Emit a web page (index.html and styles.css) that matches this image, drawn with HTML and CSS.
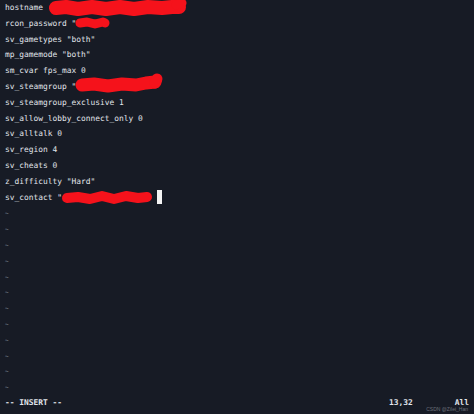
FILE: index.html
```html
<!DOCTYPE html>
<html>
<head>
<meta charset="utf-8">
<link rel="stylesheet" href="styles.css">
</head>
<body>
<div class="term">
  <div class="buf">
    <div class="ln">hostname</div>
    <div class="ln">rcon_password "</div>
    <div class="ln">sv_gametypes "both"</div>
    <div class="ln">mp_gamemode "both"</div>
    <div class="ln">sm_cvar fps_max 0</div>
    <div class="ln">sv_steamgroup "</div>
    <div class="ln">sv_steamgroup_exclusive 1</div>
    <div class="ln">sv_allow_lobby_connect_only 0</div>
    <div class="ln">sv_alltalk 0</div>
    <div class="ln">sv_region 4</div>
    <div class="ln">sv_cheats 0</div>
    <div class="ln">z_difficulty "Hard"</div>
    <div class="ln">sv_contact "<span class="gap"></span><span class="cursor"></span></div>
    <div class="ln tl">~</div>
    <div class="ln tl">~</div>
    <div class="ln tl">~</div>
    <div class="ln tl">~</div>
    <div class="ln tl">~</div>
    <div class="ln tl">~</div>
    <div class="ln tl">~</div>
    <div class="ln tl">~</div>
    <div class="ln tl">~</div>
    <div class="ln tl">~</div>
    <div class="ln tl">~</div>
    <div class="ln tl">~</div>
  </div>
  <div class="status">
    <span class="mode">-- INSERT --</span>
    <span class="pos">13,32</span>
    <span class="all">All</span>
  </div>
  <span class="wm">CSDN @Zilei_Han</span>
  <svg class="redact" width="474" height="414" viewBox="0 0 474 414">
    <g fill="none" stroke="#f5121b" stroke-linecap="round" stroke-linejoin="round">
      <path stroke-width="14" d="M56 8 L66 7 L78 9 L92 7 L106 9 L120 7 L134 9 L148 7 L162 8 L172 7 L179 7"/>
      <path stroke-width="9" d="M176 5 L182 3"/>
      <path stroke-width="9" d="M80 23 L87 22 L95 24 L103 22 L105 23"/>
      <path stroke-width="13" d="M82 85 L94 84 L108 86 L122 84 L136 85 L146 83 L155 82"/>
      <path stroke-width="11" d="M155 83 L157 79"/>
      <path stroke-width="10" d="M67 198 L78 197 L90 199 L102 196 L114 199 L126 196 L138 198 L147 197"/>
    </g>
  </svg>
</div>
</body>
</html>
```
FILE: styles.css
```css
html, body {
  margin: 0;
  padding: 0;
  background: #171b25;
}
.term {
  position: relative;
  width: 474px;
  height: 414px;
  overflow: hidden;
  background: #171b25;
  color: #e2e6ec;
  font-family: "DejaVu Sans Mono", "Liberation Mono", monospace;
  font-size: 7.9px;
  line-height: 15.8px;
}
.buf {
  padding-left: 5px;
}
.ln {
  height: 15.8px;
  white-space: pre;
}
.tl {
  color: #8b93a3;
  font-size: 6px;
}
.gap {
  display: inline-block;
  width: 95px;
}
.cursor {
  display: inline-block;
  width: 5px;
  height: 14px;
  background: #f4f4f4;
  vertical-align: -4px;
}
.status {
  display: flex;
  align-items: center;
  height: 15.8px;
  padding: 0 5px;
  font-weight: bold;
}
.mode {
  flex: 1;
}
.pos {
  margin-right: 42px;
}
.wm {
  position: absolute;
  right: 6px;
  bottom: 2px;
  font-family: "Liberation Sans", sans-serif;
  font-size: 5px;
  line-height: 6px;
  color: #6b707a;
}
.redact {
  position: absolute;
  left: 0;
  top: 0;
}
```
